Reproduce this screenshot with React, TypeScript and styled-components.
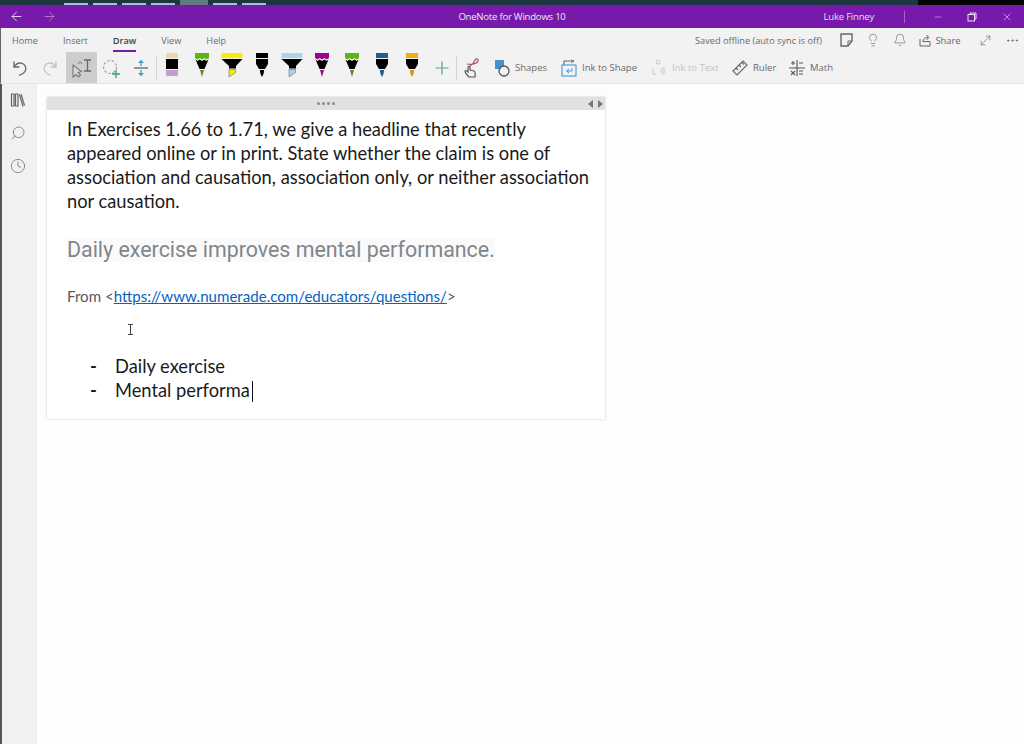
import React from 'react';
import styled, { createGlobalStyle } from 'styled-components';
import {
  ArrowLeft,
  ArrowRight,
  Bell,
  Clock,
  Lightbulb,
  Minus,
  MoveDiagonal,
  MoreHorizontal,
  Search,
  X,
} from 'lucide-react';

const GlobalStyle = createGlobalStyle`
  html, body {
    margin: 0;
    padding: 0;
    background: #fff;
  }
  body {
    font-family: "Open Sans", "Liberation Sans", sans-serif;
  }
`;

const Window = styled.div`
  width: 1024px;
  height: 744px;
  overflow: hidden;
  display: flex;
  flex-direction: column;
  background: #fdfdfd;
`;

const DesktopStrip = styled.div`
  height: 5px;
  flex: none;
  display: flex;
  background: #1c3742;
`;

const TaskGroup = styled.div`
  flex: 1;
  display: flex;
  align-items: flex-end;
  gap: 5px;
  padding-left: 64px;
`;

const TaskItem = styled.span<{ $w: number; $active?: boolean }>`
  width: ${p => p.$w}px;
  height: ${p => (p.$active ? 5 : 2)}px;
  background: ${p => (p.$active ? '#62797f' : '#a9c2d2')};
`;

const BlackCorner = styled.div`
  width: 106px;
  background: #030303;
`;

const TitleBar = styled.div`
  height: 23px;
  flex: none;
  display: grid;
  grid-template-columns: 1fr auto 1fr;
  align-items: center;
  background: #7719aa;
  color: #f1e6f6;
  font-size: 9.6px;
  letter-spacing: -0.25px;
`;

const TitleLeft = styled.div`
  display: flex;
  align-items: center;
  gap: 18px;
  padding-left: 9px;
`;

const TitleRight = styled.div`
  display: flex;
  align-items: center;
  justify-content: flex-end;
  color: #e9d5f2;
`;

const UserName = styled.span`
  margin-right: 30px;
  color: #eadcf2;
`;

const TitleDivider = styled.span`
  width: 1px;
  height: 12px;
  margin-right: 28px;
  background: #a565c6;
`;

const WinButtons = styled.div`
  display: flex;
  align-items: center;
  gap: 24px;
  padding-right: 11px;
`;

const Ribbon = styled.div`
  flex: none;
  background: #f2f2f2;
  border-left: 1px solid #666;
  border-bottom: 1px solid #e4e4e4;
`;

const TabRow = styled.div`
  height: 24px;
  display: flex;
  align-items: center;
  padding: 0 3px 0 11px;
  gap: 25px;
  font-size: 9.2px;
  color: #666;
`;

const Tab = styled.span<{ $active?: boolean }>`
  position: relative;
  padding-top: 1px;
  line-height: 23px;
  color: ${p => (p.$active ? '#444' : '#6b6b6b')};
  font-weight: ${p => (p.$active ? 600 : 400)};

  ${p =>
    p.$active
      ? `&::after {
    content: '';
    position: absolute;
    left: 0;
    right: 0;
    bottom: 0;
    height: 2px;
    background: #7719aa;
  }`
      : ''}
`;

const StatusGroup = styled.div`
  margin-left: auto;
  display: flex;
  align-items: center;
  color: #6a6a6a;
`;

const StatusText = styled.span`
  font-size: 9.2px;
  width: 139px;
  white-space: nowrap;
`;

const ShareLabel = styled.span`
  font-size: 9.4px;
`;

const StatusIcon = styled.span<{ $w: number }>`
  width: ${p => p.$w}px;
  display: flex;
  align-items: center;
  justify-content: center;
  gap: 3px;
  color: #666;
`;

const ToolRow = styled.div`
  height: 31px;
  display: flex;
  align-items: stretch;
  padding-left: 4px;
`;

const ToolSlot = styled.div<{ $w: number; $active?: boolean; $ml?: number }>`
  flex: none;
  width: ${p => p.$w}px;
  margin-left: ${p => p.$ml ?? 0}px;
  display: flex;
  align-items: center;
  justify-content: center;
  background: ${p => (p.$active ? '#cdcdcb' : 'transparent')};
`;

const PenSlot = styled(ToolSlot)`
  align-items: flex-start;
`;

const Separator = styled.div`
  flex: none;
  width: 1px;
  margin: 4px 0 3px;
  background: #d4d4d4;
`;

const LabelTool = styled.div<{ $w: number; $ml?: number; $muted?: boolean }>`
  flex: none;
  width: ${p => p.$w}px;
  margin-left: ${p => p.$ml ?? 0}px;
  display: flex;
  align-items: center;
  gap: 5px;
  font-size: 9.5px;
  white-space: nowrap;
  color: ${p => (p.$muted ? '#c4c4c4' : '#6a6a6a')};
`;

const Workspace = styled.div`
  flex: 1;
  display: flex;
  min-height: 0;
  border-left: 2px solid #555;
`;

const Sidebar = styled.div`
  flex: none;
  width: 35px;
  box-sizing: border-box;
  display: flex;
  flex-direction: column;
  align-items: center;
  gap: 17px;
  padding: 8px 3px 0 0;
  background: #f1f1f1;
  color: #6a6a6a;
`;

const MirroredSearch = styled(Search)`
  transform: scaleX(-1);
`;

const Canvas = styled.div`
  flex: 1;
  padding: 13px 0 0 10px;
`;

const NoteContainer = styled.div`
  position: relative;
  width: 558px;
  display: flex;
  flex-direction: column;
  background: #fff;
  box-shadow: 0 0 2px rgba(0, 0, 0, 0.22);
`;

const NoteHandle = styled.div`
  position: relative;
  height: 13px;
  display: flex;
  align-items: center;
  justify-content: center;
  gap: 2px;
  background: #e1e1e1;
`;

const HandleDot = styled.span`
  width: 3px;
  height: 3px;
  border-radius: 50%;
  background: #8c8c8c;
`;

const HandleArrows = styled.div`
  position: absolute;
  right: 2px;
  top: 3px;
  display: flex;
  gap: 3px;
`;

const NoteBody = styled.div`
  padding: 7px 12px 17px 20px;
  font-family: "Lato", "Carlito", sans-serif;
  color: #1a1a1a;
`;

const Paragraph = styled.p`
  margin: 0;
  font-size: 18.3px;
  line-height: 24px;
  white-space: nowrap;
`;

const Headline = styled.h2`
  margin: 25px 0 0;
  font-family: Roboto, sans-serif;
  font-size: 21.4px;
  font-weight: 400;
  line-height: 24px;
  color: #80868b;
  background: #fafafa;
  width: 428px;
  white-space: nowrap;
`;

const Source = styled.p`
  margin: 22px 0 0;
  font-size: 15.1px;
  line-height: 24px;
  color: #595959;
`;

const SourceLink = styled.a`
  color: #0563c1;
  text-decoration: underline;
`;

const BulletList = styled.ul`
  list-style: none;
  margin: 46px 0 0;
  padding: 0 0 0 23px;
`;

const BulletItem = styled.li`
  display: flex;
  font-size: 18.3px;
  line-height: 24px;
  white-space: nowrap;

  &::before {
    content: '-';
    width: 25px;
    font-weight: 700;
  }
`;

const Caret = styled.span`
  display: inline-block;
  width: 1px;
  height: 21px;
  margin-left: 2px;
  vertical-align: -5px;
  background: #111;
`;

const IBeam = styled.svg`
  position: absolute;
  left: 80px;
  top: 227px;
`;

type PenProps = { top: string; tip?: string };

const Marker = () => (
  <svg width="24" height="26" viewBox="0 0 24 26">
    <rect x="6" y="1" width="12" height="5" rx="1" fill="#f0d9a0" />
    <rect x="6" y="7" width="12" height="10" fill="#000" />
    <path d="M6 18H18V22.5Q18 24 16.5 24H7.5Q6 24 6 22.5Z" fill="#c79ad0" />
  </svg>
);

const ScallopPen = ({ top, tip }: PenProps) => (
  <svg width="24" height="26" viewBox="0 0 24 26">
    <path d="M5 1H19V6L16.5 7.5L14.5 6L12 7.5L9.5 6L7.5 7.5L5 6Z" fill={top} />
    <path d="M5.5 7.5L7.5 9L9.5 7.5L12 9L14.5 7.5L16.5 9L18.5 7.5L14.5 17H9.5Z" fill="#000" />
    <path d="M10 18H14L12 25Z" fill={tip ?? top} />
  </svg>
);

const FlatPen = ({ top, tip }: PenProps) => (
  <svg width="24" height="26" viewBox="0 0 24 26">
    <rect x="6" y="1" width="12" height="5" fill={top} />
    <path d="M6 7H18V12L15 17H9L6 12Z" fill="#000" />
    <path d="M9.8 18H14.2L13.5 22L12 25L10.5 22Z" fill={tip ?? '#000'} />
  </svg>
);

const Highlighter = ({ top }: PenProps) => (
  <svg width="24" height="26" viewBox="0 0 24 26">
    <rect x="1.5" y="1" width="21" height="5" fill={top} />
    <path d="M1.5 7H22.5L16 14V16.5H9V14Z" fill="#000" />
    <path d="M9 17.5H15.5V20.5L9 25Z" fill={top} stroke="#555" strokeWidth="0.5" />
  </svg>
);

const UndoIcon = () => (
  <svg width="18" height="18" viewBox="0 0 18 18" fill="none" stroke="#666" strokeWidth="1.3">
    <path d="M3 2.5V8H8.5" />
    <path d="M3 8C5 5 8 3.5 10.5 4.2C14.2 5.2 15.7 9 14.2 12C13.2 14 11 15.5 8 16.3" />
  </svg>
);

const RedoIcon = () => (
  <svg width="18" height="18" viewBox="0 0 18 18" fill="none" stroke="#c2c2c2" strokeWidth="1.3">
    <path d="M15 2.5V8H9.5" />
    <path d="M15 8C13 5 10 3.5 7.5 4.2C3.8 5.2 2.3 9 3.8 12C4.8 14 7 15.5 10 16.3" />
  </svg>
);

const AddPenIcon = () => (
  <svg width="14" height="14" viewBox="0 0 14 14" fill="none" stroke="#56a67f" strokeWidth="1.2">
    <path d="M7 0.5V13.5M0.5 7H13.5" />
  </svg>
);

const LassoIcon = () => (
  <svg width="22" height="22" viewBox="0 0 22 22" fill="none">
    <circle cx="9" cy="10" r="6.5" stroke="#a2a2a2" strokeWidth="1.2" strokeDasharray="2.5 2" />
    <path d="M15 13V21M11 17H19" stroke="#3f9a77" strokeWidth="1.3" />
  </svg>
);

const SpaceIcon = () => (
  <svg width="16" height="18" viewBox="0 0 16 18" fill="none">
    <path d="M1 9H15" stroke="#7d7d7d" strokeWidth="1.6" />
    <path d="M8 2.5V7M8 11V15.5" stroke="#3a9ed2" strokeWidth="1.3" />
    <path d="M5 4L8 0.8L11 4ZM5 14L8 17.2L11 14Z" fill="#3a9ed2" />
  </svg>
);

const SelectIcon = () => (
  <svg width="24" height="22" viewBox="0 0 24 22" fill="none">
    <path d="M3 8V20L6 17.5L8.5 20L10.5 18L8 15.5L11.5 14.5Z" stroke="#777" strokeWidth="1.1" fill="#d8d8d6" />
    <path d="M8 7L10 4.5L12 7" stroke="#777" strokeWidth="1" />
    <path d="M14 3H21M17.5 3V14M14 14H21" stroke="#666" strokeWidth="1.3" />
  </svg>
);

const GestureIcon = () => (
  <svg width="18" height="22" viewBox="0 0 18 22" fill="none">
    <path d="M4 7C8 8 14 7 15 4C16 2 13 1 12 3C11 6 9 8 7 9" stroke="#b5525c" strokeWidth="1.2" />
    <path d="M6 20C4 18 2 15 2 14C3 13 4 14 5 15V10.5C5 9 7 9 7 10.5V13L11 14C12.5 14.5 12.5 16 12 20Z" stroke="#555" strokeWidth="1.2" fill="#f2f2f2" />
  </svg>
);

const ShapesIcon = () => (
  <svg width="16" height="18" viewBox="0 0 16 18" fill="none">
    <rect x="1" y="1" width="9" height="9" fill="#4a90c8" />
    <circle cx="10" cy="12" r="5" fill="#f2f2f2" stroke="#555" strokeWidth="1.3" />
  </svg>
);

const InkShapeIcon = () => (
  <svg width="16" height="18" viewBox="0 0 16 18" fill="none">
    <path d="M3 6V2H13" stroke="#666" strokeWidth="1.1" />
    <path d="M10 1L13 2L10 4" stroke="#666" strokeWidth="0.8" />
    <rect x="1" y="6" width="14" height="11" stroke="#3d9ad6" strokeWidth="1.1" />
    <path d="M11 9V12H6M8 10L5.5 12L8 14" stroke="#3d9ad6" strokeWidth="1" />
  </svg>
);

const InkTextIcon = () => (
  <svg width="16" height="18" viewBox="0 0 16 18" fill="none" stroke="#c8c8c8" strokeWidth="1">
    <path d="M7 1A2 2 0 1 1 7 5A2 2 0 1 1 7 1M2 9V15H5M13 9A3 3 0 1 0 13 15V8.5" />
  </svg>
);

const RulerIcon = () => (
  <svg width="16" height="16" viewBox="0 0 16 16" fill="none" stroke="#666" strokeWidth="1.1">
    <path d="M1 11L11 1L15 5L5 15Z" />
    <path d="M4 8L6 10M7 5L9 7M10 2.5L12 4.5" />
  </svg>
);

const MathIcon = () => (
  <svg width="16" height="18" viewBox="0 0 16 18" fill="none" stroke="#555" strokeWidth="1.1">
    <path d="M0 9H16M8 1V17M2 4H6M4 2V6M10 4H14M2 12L6 16M6 12L2 16M10 12H14M10 15H14" />
  </svg>
);

const NotesIcon = () => (
  <svg width="14" height="14" viewBox="0 0 14 14" fill="none" stroke="#666" strokeWidth="1.4">
    <path d="M1 1H12V8L8 13H1Z" fill="#f2f2f2" />
    <path d="M12 8H8V13" strokeWidth="1" />
  </svg>
);

const ShareIcon = () => (
  <svg width="13" height="13" viewBox="0 0 13 13" fill="none" stroke="#666" strokeWidth="1">
    <path d="M1 5V12H11V7.5H4" />
    <path d="M4 8C4 4.5 6 3.5 9 3.5M7.5 1L10 3.5L7.5 6" />
  </svg>
);

const RestoreIcon = () => (
  <svg width="10" height="10" viewBox="0 0 10 10" fill="none" stroke="#f0e0f6" strokeWidth="1">
    <rect x="1" y="2.5" width="6.5" height="6.5" />
    <path d="M3 2.5V1H9V7H7.5" />
  </svg>
);

const BooksIcon = () => (
  <svg width="16" height="16" viewBox="0 0 16 16" fill="none" stroke="#666" strokeWidth="1.2">
    <path d="M1.5 2V14H4V2ZM5.5 2V14H8V2ZM9.5 2.5L13 14.5" />
    <path d="M11 2L14.5 13.5" />
  </svg>
);

const ArrowLeftTri = () => (
  <svg width="6" height="8" viewBox="0 0 6 8">
    <path d="M5 0V8L0 4Z" fill="#777" />
  </svg>
);

const ArrowRightTri = () => (
  <svg width="6" height="8" viewBox="0 0 6 8">
    <path d="M1 0V8L6 4Z" fill="#777" />
  </svg>
);

const taskWidths = [24, 24, 24, 24, 28, 24, 24];

const App: React.FC = () => {
  return (
    <Window>
      <GlobalStyle />
      <DesktopStrip>
        <TaskGroup>
          {taskWidths.map((w, i) => (
            <TaskItem key={i} $w={w} $active={i === 4} />
          ))}
        </TaskGroup>
        <BlackCorner />
      </DesktopStrip>

      <TitleBar>
        <TitleLeft>
          <ArrowLeft size={15} strokeWidth={1.4} color="#f3e6f8" />
          <ArrowRight size={15} strokeWidth={1.4} color="#b782d2" />
        </TitleLeft>
        <span>OneNote for Windows 10</span>
        <TitleRight>
          <UserName>Luke Finney</UserName>
          <TitleDivider />
          <WinButtons>
            <Minus size={10} strokeWidth={1.3} />
            <RestoreIcon />
            <X size={12} strokeWidth={1.3} />
          </WinButtons>
        </TitleRight>
      </TitleBar>

      <Ribbon>
        <TabRow>
          <Tab>Home</Tab>
          <Tab>Insert</Tab>
          <Tab $active>Draw</Tab>
          <Tab>View</Tab>
          <Tab>Help</Tab>
          <StatusGroup>
            <StatusText>Saved offline (auto sync is off)</StatusText>
            <StatusIcon $w={26}><NotesIcon /></StatusIcon>
            <StatusIcon $w={26}><Lightbulb size={14} strokeWidth={1.1} /></StatusIcon>
            <StatusIcon $w={27}><Bell size={14} strokeWidth={1.1} /></StatusIcon>
            <StatusIcon $w={54}><ShareIcon /><ShareLabel>Share</ShareLabel></StatusIcon>
            <StatusIcon $w={36}><MoveDiagonal size={15} strokeWidth={1} /></StatusIcon>
            <StatusIcon $w={18}><MoreHorizontal size={15} strokeWidth={1.6} /></StatusIcon>
          </StatusGroup>
        </TabRow>

        <ToolRow>
          <ToolSlot $w={30}><UndoIcon /></ToolSlot>
          <ToolSlot $w={30}><RedoIcon /></ToolSlot>
          <ToolSlot $w={31} $ml={1} $active><SelectIcon /></ToolSlot>
          <ToolSlot $w={29}><LassoIcon /></ToolSlot>
          <ToolSlot $w={30}><SpaceIcon /></ToolSlot>
          <Separator />
          <PenSlot $w={30}><Marker /></PenSlot>
          <PenSlot $w={30}><ScallopPen top="#5cb510" tip="#7a7a2a" /></PenSlot>
          <PenSlot $w={30}><Highlighter top="#f8ee00" /></PenSlot>
          <PenSlot $w={30}><FlatPen top="#000" /></PenSlot>
          <PenSlot $w={30}><Highlighter top="#a9d4f2" /></PenSlot>
          <PenSlot $w={30}><ScallopPen top="#99068e" /></PenSlot>
          <PenSlot $w={30}><ScallopPen top="#5cb510" tip="#7a7a2a" /></PenSlot>
          <PenSlot $w={30}><FlatPen top="#1a5f96" tip="#1a5f96" /></PenSlot>
          <PenSlot $w={30}><FlatPen top="#f2ab1c" tip="#d9961a" /></PenSlot>
          <ToolSlot $w={29}><AddPenIcon /></ToolSlot>
          <Separator />
          <ToolSlot $w={29}><GestureIcon /></ToolSlot>
          <LabelTool $ml={8} $w={67}><ShapesIcon />Shapes</LabelTool>
          <LabelTool $w={90}><InkShapeIcon />Ink to Shape</LabelTool>
          <LabelTool $w={81} $muted><InkTextIcon />Ink to Text</LabelTool>
          <LabelTool $w={57}><RulerIcon />Ruler</LabelTool>
          <LabelTool $w={60}><MathIcon />Math</LabelTool>
        </ToolRow>
      </Ribbon>

      <Workspace>
        <Sidebar>
          <BooksIcon />
          <MirroredSearch size={16} strokeWidth={1.1} />
          <Clock size={16} strokeWidth={1.1} />
        </Sidebar>
        <Canvas>
          <NoteContainer>
            <NoteHandle>
              <HandleDot />
              <HandleDot />
              <HandleDot />
              <HandleDot />
              <HandleArrows>
                <ArrowLeftTri />
                <ArrowRightTri />
              </HandleArrows>
            </NoteHandle>
            <NoteBody>
              <Paragraph>In Exercises 1.66 to 1.71, we give a headline that recently</Paragraph>
              <Paragraph>appeared online or in print. State whether the claim is one of</Paragraph>
              <Paragraph>association and causation, association only, or neither association</Paragraph>
              <Paragraph>nor causation.</Paragraph>
              <Headline>Daily exercise improves mental performance.</Headline>
              <Source>
                From &lt;<SourceLink href="#">https://www.numerade.com/educators/questions/</SourceLink>&gt;
              </Source>
              <BulletList>
                <BulletItem>Daily exercise</BulletItem>
                <BulletItem>
                  <span>Mental performa<Caret /></span>
                </BulletItem>
              </BulletList>
            </NoteBody>
            <IBeam width="7" height="11" viewBox="0 0 7 11" fill="none" stroke="#444" strokeWidth="1">
              <path d="M1 .5H6M3.5 .5V10.5M1 10.5H6" />
            </IBeam>
          </NoteContainer>
        </Canvas>
      </Workspace>
    </Window>
  );
};

export default App;
